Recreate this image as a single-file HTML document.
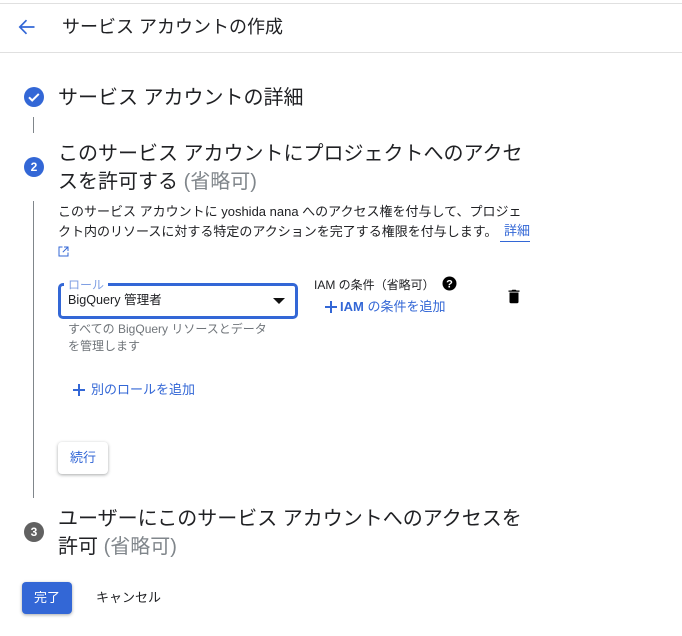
<!DOCTYPE html>
<html lang="ja"><head><meta charset="utf-8"><style>
html,body{margin:0;padding:0;background:#fff}
body{width:682px;height:636px;position:relative;overflow:hidden;font-family:"Liberation Sans","Noto Sans CJK JP",sans-serif;color:#202124}
.a{position:absolute;white-space:nowrap}
.h{font-size:20px;line-height:28px;color:#202124}
.g{color:#80868b}
.b{font-size:13px;line-height:20px}
.blue{color:#3367d6}
.c{position:absolute;left:24px;width:20px;height:20px;border-radius:50%;background:#3367d6;color:#fff;font-weight:bold;font-size:12px;line-height:20px;text-align:center}
</style></head><body>
<div class="a" style="left:0;top:3px;width:682px;height:1px;background:#e0e0e0"></div>
<div class="a" style="left:0;top:52px;width:682px;height:1px;background:#e0e0e0"></div>
<svg class="a" style="left:17px;top:17px" width="20" height="20" viewBox="0 0 20 20"><path d="M17.5 10H3M9.5 3.2L2.8 10l6.7 6.8" fill="none" stroke="#3367d6" stroke-width="1.7"/></svg>
<div class="a" style="left:62px;top:14px;font-size:18px;line-height:26px">サービス アカウントの作成</div>

<div class="c" style="top:87px"><svg width="20" height="20" viewBox="0 0 20 20" style="display:block"><path d="M5 10.3l3.2 3.2 6.6-6.6" fill="none" stroke="#fff" stroke-width="2"/></svg></div>
<div class="a h" style="left:58px;top:84px">サービス アカウントの詳細</div>
<div class="a" style="left:33px;top:117px;width:1px;height:16px;background:#80868b"></div>

<div class="c" style="top:157px">2</div>
<div class="a h" style="left:58px;top:140px">このサービス アカウントにプロジェクトへのアクセ</div>
<div class="a h" style="left:58px;top:168px">スを許可する <span class="g">(省略可)</span></div>
<div class="a" style="left:33px;top:201px;width:1px;height:297px;background:#80868b"></div>

<div class="a b" style="left:58px;top:202px">このサービス アカウントに yoshida nana へのアクセス権を付与して、プロジェ</div>
<div class="a b" style="left:58px;top:222px">クト内のリソースに対する特定のアクションを完了する権限を付与します。</div>
<div class="a b blue" style="left:500px;top:222px;border-bottom:1px solid #3367d6;line-height:18px;padding:0 0 1px 4px">詳細</div>
<svg class="a" style="left:58px;top:246px" width="11" height="11" viewBox="0 0 11 11"><path d="M4.5 1H1v9h9V6.5M6 1h4v4M10 1L4.8 6.2" fill="none" stroke="#3367d6" stroke-width="1"/></svg>

<div class="a" style="left:58px;top:283px;width:240px;height:36px;box-sizing:border-box;border:3px solid #3367d6;border-radius:5px"></div>
<div class="a" style="left:64px;top:278px;background:#fff;padding:0 4px;font-size:12px;line-height:14px;color:#7f9fe3;height:8px;overflow:visible">ロール</div>
<div class="a b" style="left:68px;top:290px;font-size:12.6px">BigQuery 管理者</div>
<div class="a" style="left:273px;top:298px;width:0;height:0;border-left:6px solid transparent;border-right:6px solid transparent;border-top:6px solid #111"></div>
<div class="a" style="left:68px;top:321px;font-size:12px;line-height:17px;color:#70757a">すべての BigQuery リソースとデータ<br>を管理します</div>

<div class="a" style="left:314px;top:276px;font-size:12px;line-height:18px;color:#202124">IAM の条件（省略可）</div>
<svg class="a" style="left:442px;top:276px" width="15" height="15" viewBox="0 0 15 15"><circle cx="7.5" cy="7.5" r="7" fill="#000"/><text x="7.5" y="11.5" text-anchor="middle" font-family="Liberation Sans" font-weight="bold" font-size="11" fill="#fff">?</text></svg>
<svg class="a" style="left:324px;top:300px" width="14" height="14" viewBox="0 0 14 14"><path d="M7 1v12M1 7h12" stroke="#3367d6" stroke-width="2"/></svg>
<div class="a b blue" style="left:340px;top:297px"><b style="font-weight:bold">IAM</b> の条件を追加</div>
<svg class="a" style="left:506px;top:288px" width="16" height="16" viewBox="0 0 16 16"><path d="M3.5 4.5h9v9.5a1.2 1.2 0 0 1-1.2 1.2H4.7A1.2 1.2 0 0 1 3.5 14zM2.5 2.5h3l.8-.8h3.4l.8.8h3v1.2h-11z" fill="#000"/></svg>

<svg class="a" style="left:72px;top:383px" width="14" height="14" viewBox="0 0 14 14"><path d="M7 1v12M1 7h12" stroke="#3367d6" stroke-width="2"/></svg>
<div class="a b blue" style="left:91px;top:380px">別のロールを追加</div>

<div class="a b blue" style="left:58px;top:442px;width:50px;height:32px;line-height:32px;border-radius:4px;background:#fff;text-align:center;box-shadow:0 1px 3px rgba(60,64,67,.45)">続行</div>

<div class="c" style="top:522px;background:#616161">3</div>
<div class="a h" style="left:58px;top:505px">ユーザーにこのサービス アカウントへのアクセスを</div>
<div class="a h" style="left:58px;top:533px">許可 <span class="g">(省略可)</span></div>

<div class="a b" style="left:22px;top:582px;width:50px;height:32px;line-height:32px;border-radius:4px;background:#3367d6;color:#fff;text-align:center;box-shadow:0 1px 3px rgba(60,64,67,.45)">完了</div>
<div class="a b" style="left:96px;top:588px;color:#202124">キャンセル</div>
</body></html>
